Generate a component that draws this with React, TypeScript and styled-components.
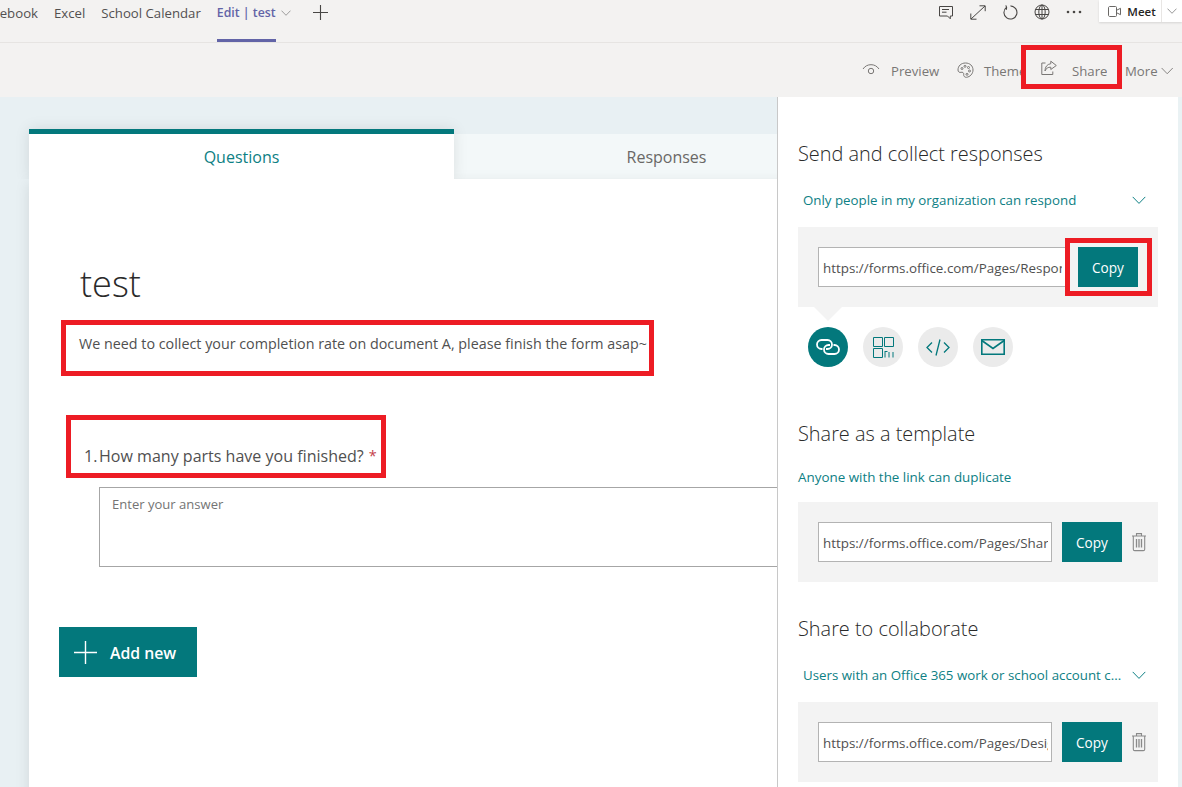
import React from "react";
import styled, { createGlobalStyle } from "styled-components";

const TEAL = "#03787c";
const TEAL_TEXT = "#0d8084";
const FONT = `"Open Sans", "Noto Sans", "Liberation Sans", sans-serif`;

const Global = createGlobalStyle`
  html, body { margin: 0; padding: 0; background: #e8f0f3; }
  body { font-family: ${FONT}; }
  * { box-sizing: border-box; }
`;

const Page = styled.div`
  position: relative;
  width: 1182px;
  height: 787px;
  overflow: hidden;
  display: flex;
  flex-direction: column;
  background: #e8f0f3;
`;

const TopBar = styled.header`
  height: 43px;
  flex: none;
  display: flex;
  justify-content: space-between;
  background: #f3f2f1;
  border-bottom: 1px solid #e6e4e2;
`;

const Nav = styled.nav`
  display: flex;
  gap: 16px;
  align-items: flex-start;
`;

const ClippedNav = styled.div`
  width: 38px;
  height: 42px;
  display: flex;
  justify-content: flex-end;
  overflow: hidden;
`;

const NavItem = styled.span<{ $active?: boolean }>`
  flex: none;
  height: 42px;
  padding-top: 4px;
  font-size: ${(p) => (p.$active ? "12.3px" : "13.2px")};
  line-height: 18px;
  white-space: nowrap;
  color: ${(p) => (p.$active ? "#6264a7" : "#525050")};
  font-weight: ${(p) => (p.$active ? 600 : 400)};
  border-bottom: 3px solid ${(p) => (p.$active ? "#6264a7" : "transparent")};
`;

const NavExtra = styled.span<{ $left: number; $top: number }>`
  display: flex;
  margin-left: ${(p) => p.$left}px;
  margin-top: ${(p) => p.$top}px;
  color: #484644;
`;

const TopActions = styled.div`
  display: flex;
  align-items: flex-start;
`;

const TopIcon = styled.span`
  width: 32px;
  height: 24px;
  display: flex;
  align-items: center;
  justify-content: center;
  color: #484644;
`;

const MeetGroup = styled.div`
  margin-left: 9px;
  height: 22px;
  display: flex;
  background: #fff;
  box-shadow: 0 1px 2px rgba(0, 0, 0, 0.12);
`;

const MeetButton = styled.div`
  width: 63px;
  display: flex;
  align-items: center;
  justify-content: center;
  gap: 6px;
  padding-left: 4px;
  font-size: 11.5px;
  font-weight: 600;
  color: #252423;
  border-right: 1px solid #e8e6e4;
`;

const MeetCaret = styled.div`
  width: 20px;
  display: flex;
  align-items: center;
  justify-content: center;
  color: #6e6e6e;
`;

const Toolbar = styled.div`
  height: 54px;
  flex: none;
  display: flex;
  align-items: center;
  justify-content: flex-end;
  padding: 1px 9px 0 0;
  background: #f3f2f1;
`;

const ToolItem = styled.div<{ $gap: number; $width: number; $after: number }>`
  width: ${(p) => p.$width}px;
  margin-right: ${(p) => p.$after}px;
  display: flex;
  align-items: center;
  gap: ${(p) => p.$gap}px;
  overflow: hidden;
  white-space: nowrap;
  font-size: 13.2px;
  line-height: 20px;
  height: 26px;
  color: #797775;
`;

const ToolGlyph = styled.span<{ $lift: number }>`
  flex: none;
  display: flex;
  margin-bottom: ${(p) => p.$lift}px;
`;

const Main = styled.main`
  flex: 1;
  display: flex;
  min-height: 0;
`;

const Canvas = styled.div`
  width: 777px;
  flex: none;
  overflow: hidden;
  padding: 32px 0 0 29px;
  background: #e8f0f3;
`;

const Card = styled.section`
  width: 850px;
  height: 700px;
  display: flex;
  flex-direction: column;
`;

const Tabs = styled.div`
  display: flex;
  height: 50px;
  flex: none;
`;

const Tab = styled.div<{ $active?: boolean }>`
  width: 425px;
  display: flex;
  align-items: center;
  justify-content: center;
  font-size: 16px;
  background: ${(p) => (p.$active ? "#fff" : "#f3f8f9")};
  color: ${(p) => (p.$active ? TEAL_TEXT : "#6a6866")};
  border-top: 5px solid ${(p) => (p.$active ? TEAL : "#e8f0f3")};
  box-shadow: ${(p) => (p.$active ? "0 0 14px rgba(0,0,0,0.1)" : "none")};
  clip-path: ${(p) => (p.$active ? "inset(-14px -14px 0 -14px)" : "none")};
  position: ${(p) => (p.$active ? "relative" : "static")};
`;

const Body = styled.div`
  flex: 1;
  background: #fff;
  box-shadow: 0 4px 14px rgba(0, 0, 0, 0.1);
  padding: 80px 0 0 0;
`;

const Title = styled.h1`
  margin: 0 0 0 51px;
  font-size: 36.2px;
  line-height: 48px;
  font-weight: 300;
  color: #2a2a2a;
`;

const Description = styled.p`
  margin: 25px 0 0 50px;
  font-size: 14.32px;
  line-height: 24px;
  color: #505050;
  white-space: nowrap;
`;

const Question = styled.div`
  margin: 88px 0 0 55px;
  display: flex;
  font-size: 16.05px;
  line-height: 24px;
  color: #505050;
`;

const QuestionNumber = styled.span`
  width: 15px;
  flex: none;
`;

const Required = styled.span`
  margin-left: 5px;
  font-size: 14.5px;
  color: #c4404a;
`;

const AnswerBox = styled.div`
  margin: 19px 0 0 70px;
  width: 760px;
  height: 80px;
  padding: 6px 12px;
  border: 1px solid #a6a6a6;
  font-size: 13.05px;
  line-height: 20px;
  color: #747474;
`;

const AddButton = styled.button`
  margin: 60px 0 0 30px;
  width: 138px;
  height: 50px;
  display: flex;
  align-items: center;
  gap: 13px;
  padding: 2px 0 0 15px;
  border: 0;
  background: ${TEAL};
  color: #fff;
  font-family: ${FONT};
  font-size: 15.8px;
  font-weight: 600;
`;

const AddGlyph = styled.span`
  display: flex;
  margin-top: -2px;
`;

const Panel = styled.aside`
  width: 401px;
  flex: none;
  padding-left: 20px;
  background: #fff;
  border-left: 1px solid #c8c8c8;
`;

const Heading = styled.h2<{ $top: number }>`
  margin: ${(p) => p.$top}px 0 0;
  font-size: 19.9px;
  line-height: 30px;
  font-weight: 300;
  color: #2a2a2a;
  white-space: nowrap;
`;

const Audience = styled.div<{ $top: number }>`
  margin-top: ${(p) => p.$top}px;
  width: 348px;
  height: 20px;
  padding-left: 5px;
  display: flex;
  align-items: center;
  justify-content: space-between;
  font-size: 13.3px;
  line-height: 20px;
  color: ${TEAL_TEXT};
  white-space: nowrap;
`;

const PlainLink = styled.div<{ $top: number }>`
  margin-top: ${(p) => p.$top}px;
  height: 20px;
  font-size: 13.4px;
  line-height: 20px;
  color: ${TEAL_TEXT};
  white-space: nowrap;
`;

const LinkBox = styled.div<{ $top: number; $pointer?: boolean }>`
  position: relative;
  margin-top: ${(p) => p.$top}px;
  width: 360px;
  height: 80px;
  padding-left: 20px;
  display: flex;
  align-items: center;
  background: #f3f3f3;
  ${(p) =>
    p.$pointer
      ? `&::after {
    content: "";
    position: absolute;
    left: 16px;
    top: 80px;
    border-left: 14px solid transparent;
    border-right: 14px solid transparent;
    border-top: 14px solid #f3f3f3;
  }`
      : ""}
`;

const UrlField = styled.div<{ $width: number }>`
  width: ${(p) => p.$width}px;
  height: 40px;
  flex: none;
  padding: 2px 3px 0 4px;
  display: flex;
  align-items: center;
  background: #fff;
  border: 1px solid #b3b3b3;
  font-size: 13.4px;
  color: #505050;
`;

const UrlText = styled.span`
  flex: 1;
  min-width: 0;
  overflow: hidden;
  white-space: nowrap;
`;

const CopyButton = styled.button<{ $left: number }>`
  width: 60px;
  height: 40px;
  flex: none;
  margin-left: ${(p) => p.$left}px;
  padding: 1px 0 0;
  border: 0;
  background: ${TEAL};
  color: #fff;
  font-family: ${FONT};
  font-size: 13.6px;
`;

const Trash = styled.span`
  margin-left: 9px;
  display: flex;
  color: #8a8a8a;
`;

const ShareIcons = styled.div`
  margin-top: 20px;
  padding-left: 10px;
  display: flex;
  gap: 15px;
`;

const RoundIcon = styled.span<{ $active?: boolean }>`
  width: 40px;
  height: 40px;
  border-radius: 50%;
  display: flex;
  align-items: center;
  justify-content: center;
  background: ${(p) => (p.$active ? TEAL : "#ebebeb")};
  color: ${(p) => (p.$active ? "#fff" : TEAL)};
`;

const Strip = styled.div`
  flex: 1;
  background: #eaf2f4;
`;

const Marker = styled.div<{ $x: number; $y: number; $w: number; $h: number }>`
  position: absolute;
  left: ${(p) => p.$x}px;
  top: ${(p) => p.$y}px;
  width: ${(p) => p.$w}px;
  height: ${(p) => p.$h}px;
  border: 5px solid #ed1c24;
  pointer-events: none;
`;

const Chevron = ({ size = 14, color = "currentColor" }: { size?: number; color?: string }) => (
  <svg width={size} height={size * 0.6} viewBox="0 0 14 8.4" fill="none" stroke={color} strokeWidth="1">
    <path d="M.7.9 7 7.4 13.3.9" />
  </svg>
);

const Plus = ({ size, stroke }: { size: number; stroke: number }) => (
  <svg width={size} height={size} viewBox={`0 0 ${size} ${size}`} stroke="currentColor" strokeWidth={stroke}>
    <path d={`M${size / 2} 0V${size}M0 ${size / 2}H${size}`} />
  </svg>
);

const TrashIcon = () => (
  <svg width="16" height="20" viewBox="0 0 16 20" fill="none" stroke="currentColor" strokeWidth="1.1">
    <path d="M1 4h14M5.5 4V1.6h5V4M2.3 4v13.2c0 .9.6 1.4 1.4 1.4h8.6c.8 0 1.4-.5 1.4-1.4V4" />
    <path d="M5.5 7v8.5M8 7v8.5M10.5 7v8.5" strokeWidth="1.3" />
  </svg>
);

const Url = ({ width, left, text, trash }: { width: number; left: number; text: string; trash?: boolean }) => (
  <>
    <UrlField $width={width}>
      <UrlText>{text}</UrlText>
    </UrlField>
    <CopyButton $left={left}>Copy</CopyButton>
    {trash && (
      <Trash>
        <TrashIcon />
      </Trash>
    )}
  </>
);

export default function App() {
  return (
    <Page>
      <Global />
      <TopBar>
        <Nav>
          <ClippedNav>
            <NavItem>Notebook</NavItem>
          </ClippedNav>
          <NavItem>Excel</NavItem>
          <NavItem>School Calendar</NavItem>
          <NavItem $active>Edit | test</NavItem>
          <NavExtra $left={-11} $top={10}>
            <Chevron size={10} color="#7a7a7a" />
          </NavExtra>
          <NavExtra $left={6} $top={5}>
            <Plus size={15} stroke={1.1} />
          </NavExtra>
        </Nav>
        <TopActions>
          <TopIcon>
            <svg width="14" height="15" viewBox="0 0 14 15" fill="none" stroke="currentColor" strokeWidth="1">
              <path d="M.5 1.5h13v9.500h-2.200v2.800L8.500 11H.5z" />
              <path d="M3 4.500h7M3 7.200h4.500" />
            </svg>
          </TopIcon>
          <TopIcon>
            <svg width="16" height="15" viewBox="0 0 16 15" fill="none" stroke="currentColor" strokeWidth="1">
              <path d="M1 14 15 1M9.500.8h5.700v5.400M.8 8.500v5.700h5.700" />
            </svg>
          </TopIcon>
          <TopIcon>
            <svg width="15" height="15" viewBox="0 0 15 15" fill="none" stroke="currentColor" strokeWidth="1.1">
              <path d="M3.400 2.400A6.500 6.500 0 1 0 7.500 1c1 0 2.300.3 3.200 1M2.800.4l.8 2-.2 2.400" />
            </svg>
          </TopIcon>
          <TopIcon>
            <svg width="16" height="16" viewBox="0 0 16 16" fill="none" stroke="currentColor" strokeWidth="1">
              <circle cx="8" cy="8" r="7" />
              <ellipse cx="8" cy="8" rx="3.200" ry="7" />
              <path d="M1.300 5.500h13.400M1.300 10.500h13.400M8 1v14" />
            </svg>
          </TopIcon>
          <TopIcon>
            <svg width="16" height="4" viewBox="0 0 16 4" fill="currentColor">
              <circle cx="2" cy="2" r="1.300" />
              <circle cx="8" cy="2" r="1.300" />
              <circle cx="14" cy="2" r="1.300" />
            </svg>
          </TopIcon>
          <MeetGroup>
            <MeetButton>
              <svg width="13" height="11" viewBox="0 0 13 11" fill="none" stroke="#6a6866" strokeWidth="1">
                <path d="M2 .5h5.500c.8 0 1 .5 1 1v8c0 .6-.3 1-1 1H2c-.8 0-1.500-.4-1.500-1v-8c0-.6.7-1 1.500-1zM8.500 4.300l4-2v6.400l-4-2" />
              </svg>
              Meet
            </MeetButton>
            <MeetCaret>
              <Chevron size={10} />
            </MeetCaret>
          </MeetGroup>
        </TopActions>
      </TopBar>

      <Toolbar>
        <ToolItem $gap={11} $width={78} $after={17}>
          <ToolGlyph $lift={2}>
            <svg width="18" height="14" viewBox="0 0 18 14" fill="none" stroke="currentColor" strokeWidth="1">
              <path d="M1 6c2-3 4.800-4.300 8-4.300S15 3 17 6" />
              <circle cx="9" cy="8" r="2.700" />
            </svg>
          </ToolGlyph>
          Preview
        </ToolItem>
        <ToolItem $gap={10} $width={64} $after={20}>
          <ToolGlyph $lift={1}>
            <svg width="17" height="17" viewBox="0 0 17 17" fill="none" stroke="currentColor" strokeWidth="1">
              <path d="M8.500 1C4 1 1 4 1 8c0 2 1.500 2.700 3 2.300 1.500-.4 3 .4 2.700 2-.3 1.800 1 3.200 2.800 3 3.500-.4 6.500-3.500 6.500-7.300C16 4 13 1 8.500 1z" />
              <circle cx="5" cy="6.500" r="1" />
              <circle cx="8" cy="4.300" r="1" />
              <circle cx="11.500" cy="5.500" r="1" />
              <circle cx="12.500" cy="9" r="1" />
              <circle cx="10" cy="12.300" r="1" />
            </svg>
          </ToolGlyph>
          Theme
        </ToolItem>
        <ToolItem $gap={15} $width={66} $after={18}>
          <ToolGlyph $lift={6}>
            <svg width="16" height="16" viewBox="0 0 16 16" fill="none" stroke="currentColor" strokeWidth="1">
              <path d="M4.500 3H.8v11.500h11V11.500" />
              <path d="M9.800 1.200 15.300 5.500 9.800 9.500V7.200C7 7 5 8.500 4 11c0-4 2-6.800 5.800-7.300z" />
            </svg>
          </ToolGlyph>
          Share
        </ToolItem>
        <ToolItem $gap={3} $width={48} $after={0}>
          More
          <Chevron size={13} />
        </ToolItem>
      </Toolbar>

      <Main>
        <Canvas>
          <Card>
            <Tabs>
              <Tab $active>Questions</Tab>
              <Tab>Responses</Tab>
            </Tabs>
            <Body>
              <Title>test</Title>
              <Description>We need to collect your completion rate on document A, please finish the form asap~</Description>
              <Question>
                <QuestionNumber>1.</QuestionNumber>
                How many parts have you finished?
                <Required>*</Required>
              </Question>
              <AnswerBox>Enter your answer</AnswerBox>
              <AddButton>
                <AddGlyph>
                  <Plus size={23} stroke={1.4} />
                </AddGlyph>
                Add new
              </AddButton>
            </Body>
          </Card>
        </Canvas>

        <Panel>
          <Heading $top={42}>Send and collect responses</Heading>
          <Audience $top={21}>
            Only people in my organization can respond
            <Chevron size={14} />
          </Audience>
          <LinkBox $top={17} $pointer>
            <Url width={248} left={12} text="https://forms.office.com/Pages/ResponsePage.aspx" />
          </LinkBox>
          <ShareIcons>
            <RoundIcon $active>
              <svg width="24" height="16" viewBox="0 0 24 16" fill="none" stroke="currentColor" strokeWidth="1.800">
                <path d="M6.500 10H5.500a4.500 4.500 0 0 1 0-9h6a4.500 4.500 0 0 1 0 9H10" />
                <path d="M17.500 6h1a4.500 4.500 0 0 1 0 9h-6a4.500 4.500 0 0 1 0-9H14" />
              </svg>
            </RoundIcon>
            <RoundIcon>
              <svg width="21" height="21" viewBox="0 0 21 21" fill="none" stroke="currentColor" strokeWidth="1">
                <path d="M.5.500h9v9h-9zM11.500.500h9v9h-9zM.500 11.500h9v9h-9z" />
                <path d="M11.500 14.500h3M12 15v5.500M16 15v5.500M20 15v5.500" />
              </svg>
            </RoundIcon>
            <RoundIcon>
              <svg width="24" height="17" viewBox="0 0 24 17" fill="none" stroke="currentColor" strokeWidth="1.300">
                <path d="M6 3.500 1 8.500l5 5M18 3.500l5 5-5 5M14 .5 10 16.500" />
              </svg>
            </RoundIcon>
            <RoundIcon>
              <svg width="24" height="16" viewBox="0 0 24 16" fill="none" stroke="currentColor" strokeWidth="1.600">
                <path d="M.8.800h22.400v14.400H.8z" />
                <path d="M.8 1.500 12 9.500l11.200-8" />
              </svg>
            </RoundIcon>
          </ShareIcons>

          <Heading $top={52}>Share as a template</Heading>
          <PlainLink $top={18}>Anyone with the link can duplicate</PlainLink>
          <LinkBox $top={15}>
            <Url width={234} left={10} text="https://forms.office.com/Pages/ShareFormPage.aspx" trash />
          </LinkBox>

          <Heading $top={32}>Share to collaborate</Heading>
          <Audience $top={21}>
            Users with an Office 365 work or school account c...
            <Chevron size={14} />
          </Audience>
          <LinkBox $top={17}>
            <Url width={234} left={10} text="https://forms.office.com/Pages/DesignPage.aspx" trash />
          </LinkBox>
        </Panel>
        <Strip />
      </Main>

      <Marker $x={1021} $y={45} $w={101} $h={44} />
      <Marker $x={1065} $y={238} $w={87} $h={58} />
      <Marker $x={61} $y={320} $w={593} $h={56} />
      <Marker $x={66} $y={415} $w={320} $h={63} />
    </Page>
  );
}
